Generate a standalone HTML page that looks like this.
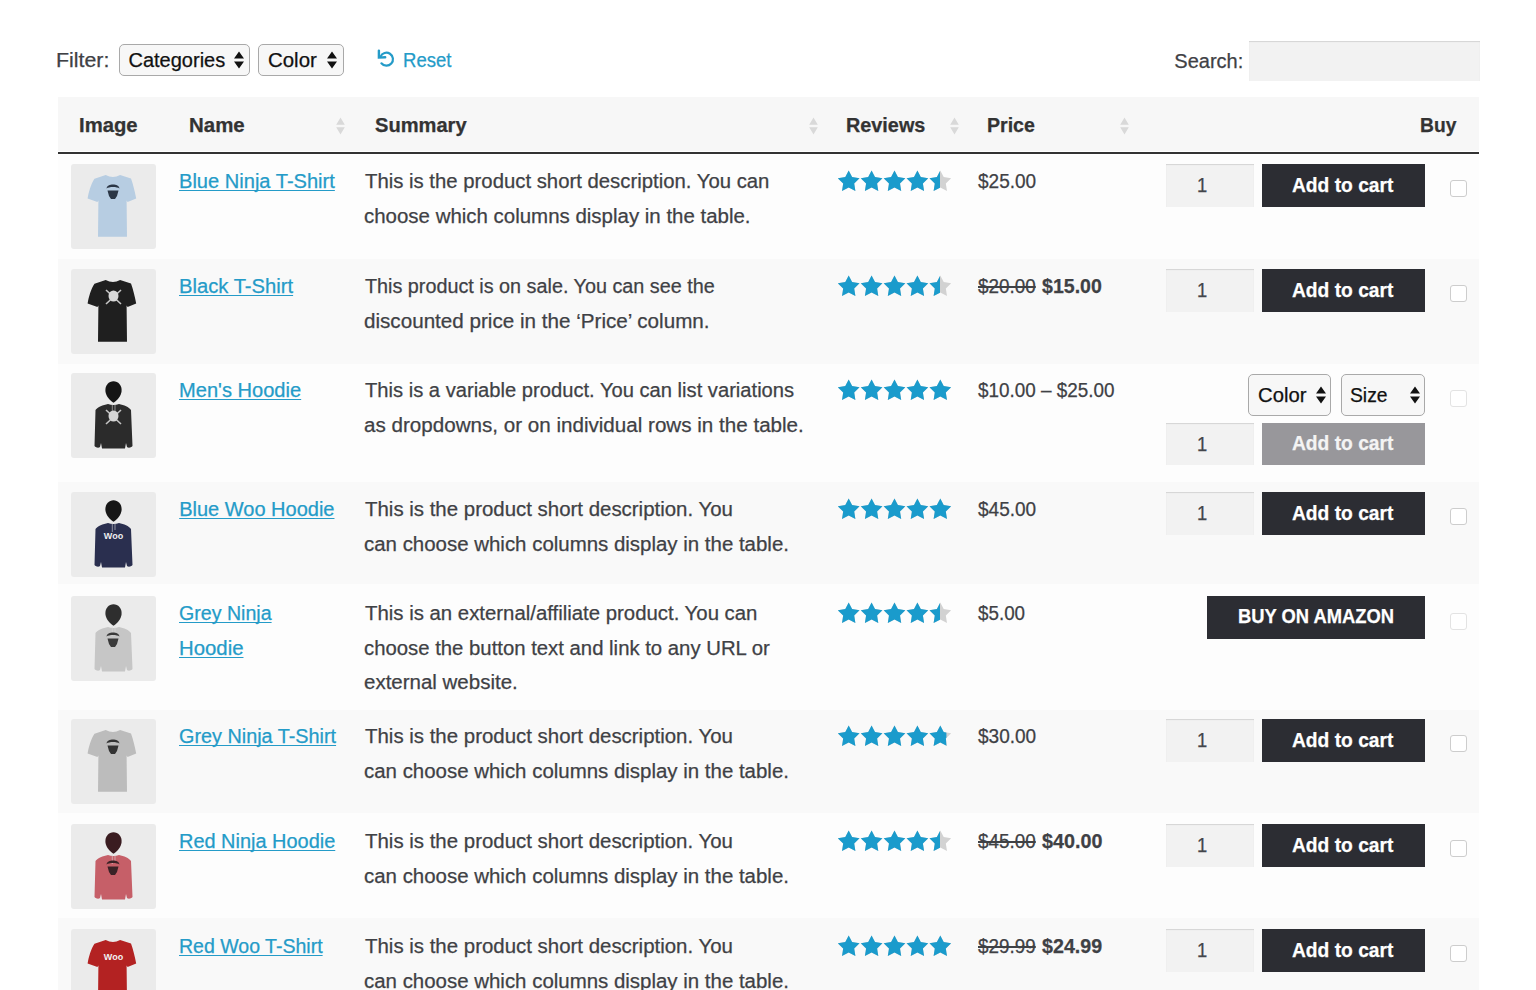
<!DOCTYPE html>
<html><head><meta charset="utf-8"><title>Product Table</title>
<style>
html,body{margin:0;padding:0;background:#fff;}
body{width:1536px;height:990px;overflow:hidden;position:relative;font-family:"Liberation Sans",sans-serif;}
.t{position:absolute;white-space:nowrap;-webkit-text-stroke:0.25px currentColor;}
.r{position:absolute;}
</style></head><body>
<div class="t" style="left:56.43px;top:50.07px;font-size:20px;line-height:20px;font-weight:400;color:#3f4145;transform:scaleX(1.0677);transform-origin:0 0;">Filter:</div>
<div class="r" style="left:118.5px;top:43.5px;width:131px;height:32.5px;border:1px solid #a9a9a9;border-radius:5px;background:#f7f7f7;box-sizing:border-box;"></div>
<div class="t" style="left:128.5px;top:50.32px;font-size:20px;line-height:20px;font-weight:400;color:#111;">Categories</div>
<svg class="r" style="left:233px;top:50.75px" width="12" height="18" viewBox="0 0 12 18"><path d="M6 0.5 L11 7.5 L1 7.5 Z M1 10.5 L11 10.5 L6 17.5 Z" fill="#111"/></svg>
<div class="r" style="left:257.5px;top:43.5px;width:86px;height:32.5px;border:1px solid #a9a9a9;border-radius:5px;background:#f7f7f7;box-sizing:border-box;"></div>
<div class="t" style="left:267.98px;top:50.32px;font-size:20px;line-height:20px;font-weight:400;color:#111;transform:scaleX(1.0213);transform-origin:0 0;">Color</div>
<svg class="r" style="left:326px;top:50.75px" width="12" height="18" viewBox="0 0 12 18"><path d="M6 0.5 L11 7.5 L1 7.5 Z M1 10.5 L11 10.5 L6 17.5 Z" fill="#111"/></svg>
<svg class="r" style="left:370px;top:44px" width="40" height="30" viewBox="0 0 40 30"><path d="M10.5 12.6 A6.5 6.5 0 1 1 11.4 19.3" fill="none" stroke="#249bc8" stroke-width="2.2" stroke-linecap="round"/><path d="M8.9 6.6 L8.9 13.6 L15.2 13.3" fill="none" stroke="#249bc8" stroke-width="2.4" stroke-linecap="round" stroke-linejoin="miter"/></svg>
<div class="t" style="left:402.57px;top:50.07px;font-size:20px;line-height:20px;font-weight:400;color:#249bc8;transform:scaleX(0.9269);transform-origin:0 0;">Reset</div>
<div class="t" style="left:1174.3px;top:51.37px;font-size:20px;line-height:20px;font-weight:400;color:#3f4145;">Search:</div>
<div class="r" style="left:1248.6px;top:40.5px;width:231px;height:40.5px;background:#f2f2f2;box-shadow:inset 0 1px 1px rgba(0,0,0,.125);"></div>
<div class="r" style="left:57.7px;top:96.7px;width:1421.5px;height:54.5px;background:#f7f7f7;"></div>
<div class="r" style="left:57.7px;top:152px;width:1421.5px;height:2.2px;background:#333;"></div>
<div class="t" style="left:79.19px;top:115.07px;font-size:20px;line-height:20px;font-weight:700;color:#333333;transform:scaleX(1.014);transform-origin:0 0;">Image</div>
<div class="t" style="left:188.98px;top:115.07px;font-size:20px;line-height:20px;font-weight:700;color:#333333;transform:scaleX(1.0226);transform-origin:0 0;">Name</div>
<div class="t" style="left:374.6px;top:115.07px;font-size:20px;line-height:20px;font-weight:700;color:#333333;transform:scaleX(1.0044);transform-origin:0 0;">Summary</div>
<div class="t" style="left:846.01px;top:115.07px;font-size:20px;line-height:20px;font-weight:700;color:#333333;transform:scaleX(0.9911);transform-origin:0 0;">Reviews</div>
<div class="t" style="left:987.02px;top:115.07px;font-size:20px;line-height:20px;font-weight:700;color:#333333;transform:scaleX(0.9792);transform-origin:0 0;">Price</div>
<div class="t" style="left:1419.74px;top:115.07px;font-size:20px;line-height:20px;font-weight:700;color:#333333;transform:scaleX(0.9622);transform-origin:0 0;">Buy</div>
<svg class="r" style="left:335.7px;top:116.5px" width="9" height="18" viewBox="0 0 9 18"><path d="M4.5 0.5 L8.8 7.8 L0.2 7.8 Z M0.2 10.2 L8.8 10.2 L4.5 17.5 Z" fill="#d9d9d9"/></svg>
<svg class="r" style="left:808.5px;top:116.5px" width="9" height="18" viewBox="0 0 9 18"><path d="M4.5 0.5 L8.8 7.8 L0.2 7.8 Z M0.2 10.2 L8.8 10.2 L4.5 17.5 Z" fill="#d9d9d9"/></svg>
<svg class="r" style="left:949.5px;top:116.5px" width="9" height="18" viewBox="0 0 9 18"><path d="M4.5 0.5 L8.8 7.8 L0.2 7.8 Z M0.2 10.2 L8.8 10.2 L4.5 17.5 Z" fill="#d9d9d9"/></svg>
<svg class="r" style="left:1119.5px;top:116.5px" width="9" height="18" viewBox="0 0 9 18"><path d="M4.5 0.5 L8.8 7.8 L0.2 7.8 Z M0.2 10.2 L8.8 10.2 L4.5 17.5 Z" fill="#d9d9d9"/></svg>
<div class="r" style="left:57.7px;top:154.5px;width:1421.5px;height:104.25px;background:#fdfdfd;"></div>
<div class="r" style="left:57.7px;top:258.75px;width:1421.5px;height:105.25px;background:#f9f9f9;"></div>
<div class="r" style="left:57.7px;top:364px;width:1421.5px;height:117.5px;background:#fdfdfd;"></div>
<div class="r" style="left:57.7px;top:481.5px;width:1421.5px;height:102.0px;background:#f9f9f9;"></div>
<div class="r" style="left:57.7px;top:583.5px;width:1421.5px;height:126.0px;background:#fdfdfd;"></div>
<div class="r" style="left:57.7px;top:709.5px;width:1421.5px;height:103.0px;background:#f9f9f9;"></div>
<div class="r" style="left:57.7px;top:812.5px;width:1421.5px;height:105.0px;background:#fdfdfd;"></div>
<div class="r" style="left:57.7px;top:917.5px;width:1421.5px;height:106.5px;background:#f9f9f9;"></div>
<svg class="r" style="left:70.5px;top:164px" width="85" height="85" viewBox="0 0 85 85"><rect width="85" height="85" rx="3" fill="#ebebeb"/><path d="M34.7,11 Q42,14.8 49.1,11 L60,14.5 C62,20 64,28 65.2,34.5 L56.6,38 L55.6,36.5 L56,72.8 L27,72.8 L27.4,36.5 L26.4,38 L16.6,34.5 C17.8,28 20,20 23.5,14.8 Z" fill="#b7cde2"/><path d="M35.5,24.5 C36,19 48,19 48.5,24.5 C46,22.5 38,22.5 35.5,24.5 Z M36.5,26.5 L47.5,26.5 L46,32 L44,35 L40,35 L38,32 Z" fill="#2b3645"/></svg>
<div class="t" style="left:179.2px;top:171.07px;font-size:20px;line-height:20px;font-weight:400;color:#249bc8;transform:scaleX(1.0038);transform-origin:0 0;text-decoration:underline;text-decoration-thickness:1.2px;text-underline-offset:1.8px;text-decoration-skip-ink:none;">Blue Ninja T-Shirt</div>
<div class="t" style="left:364.8px;top:171.07px;font-size:20px;line-height:20px;font-weight:400;color:#3f4145;transform:scaleX(1.0161);transform-origin:0 0;">This is the product short description. You can</div>
<div class="t" style="left:363.78px;top:205.77px;font-size:20px;line-height:20px;font-weight:400;color:#3f4145;transform:scaleX(1.0226);transform-origin:0 0;">choose which columns display in the table.</div>
<svg class="r" style="left:837.5px;top:170.3px" width="116" height="23" viewBox="0 0 116 23"><defs><clipPath id="c170"><rect x="0" y="0" width="102.1" height="23"/></clipPath></defs><g fill="#d2d2d2"><polygon transform="translate(0.00,0)" points="10.70,0.40 14.11,7.11 21.54,8.28 16.22,13.59 17.40,21.02 10.70,17.60 4.00,21.02 5.18,13.59 -0.14,8.28 7.29,7.11"/><polygon transform="translate(22.90,0)" points="10.70,0.40 14.11,7.11 21.54,8.28 16.22,13.59 17.40,21.02 10.70,17.60 4.00,21.02 5.18,13.59 -0.14,8.28 7.29,7.11"/><polygon transform="translate(45.80,0)" points="10.70,0.40 14.11,7.11 21.54,8.28 16.22,13.59 17.40,21.02 10.70,17.60 4.00,21.02 5.18,13.59 -0.14,8.28 7.29,7.11"/><polygon transform="translate(68.70,0)" points="10.70,0.40 14.11,7.11 21.54,8.28 16.22,13.59 17.40,21.02 10.70,17.60 4.00,21.02 5.18,13.59 -0.14,8.28 7.29,7.11"/><polygon transform="translate(91.60,0)" points="10.70,0.40 14.11,7.11 21.54,8.28 16.22,13.59 17.40,21.02 10.70,17.60 4.00,21.02 5.18,13.59 -0.14,8.28 7.29,7.11"/></g><g fill="#1a9bcc" clip-path="url(#c170)"><polygon transform="translate(0.00,0)" points="10.70,0.40 14.11,7.11 21.54,8.28 16.22,13.59 17.40,21.02 10.70,17.60 4.00,21.02 5.18,13.59 -0.14,8.28 7.29,7.11"/><polygon transform="translate(22.90,0)" points="10.70,0.40 14.11,7.11 21.54,8.28 16.22,13.59 17.40,21.02 10.70,17.60 4.00,21.02 5.18,13.59 -0.14,8.28 7.29,7.11"/><polygon transform="translate(45.80,0)" points="10.70,0.40 14.11,7.11 21.54,8.28 16.22,13.59 17.40,21.02 10.70,17.60 4.00,21.02 5.18,13.59 -0.14,8.28 7.29,7.11"/><polygon transform="translate(68.70,0)" points="10.70,0.40 14.11,7.11 21.54,8.28 16.22,13.59 17.40,21.02 10.70,17.60 4.00,21.02 5.18,13.59 -0.14,8.28 7.29,7.11"/><polygon transform="translate(91.60,0)" points="10.70,0.40 14.11,7.11 21.54,8.28 16.22,13.59 17.40,21.02 10.70,17.60 4.00,21.02 5.18,13.59 -0.14,8.28 7.29,7.11"/></g></svg>
<div class="t" style="left:978.0px;top:171.07px;font-size:20px;line-height:20px;font-weight:400;color:#3f4145;transform:scaleX(0.9508);transform-origin:0 0;">$25.00</div>
<div class="r" style="left:1166.4px;top:164px;width:87.5px;height:42.5px;background:#f2f2f2;box-shadow:inset 0 1px 1px rgba(0,0,0,.125);"></div>
<div class="t" style="left:1196.88px;top:175.07px;font-size:20px;line-height:20px;font-weight:400;color:#43454b;transform:scaleX(0.92);transform-origin:0 0;">1</div>
<div class="r" style="left:1261.6px;top:164px;width:163.6px;height:43px;background:#2c2d33;"></div>
<div class="t" style="left:1292.2px;top:175.27px;font-size:20px;line-height:20px;font-weight:700;color:#fff;transform:scaleX(0.9604);transform-origin:0 0;">Add to cart</div>
<div class="r" style="left:1449.7px;top:180.3px;width:17px;height:17px;border:1px solid #cdcdcd;border-radius:3px;background:#fff;box-sizing:border-box;"></div>
<svg class="r" style="left:70.5px;top:269px" width="85" height="85" viewBox="0 0 85 85"><rect width="85" height="85" rx="3" fill="#ebebeb"/><path d="M34.7,11 Q42,14.8 49.1,11 L60,14.5 C62,20 64,28 65.2,34.5 L56.6,38 L55.6,36.5 L56,72.8 L27,72.8 L27.4,36.5 L26.4,38 L16.6,34.5 C17.8,28 20,20 23.5,14.8 Z" fill="#1f1f1f"/><g stroke="#d9d9d9" stroke-width="1.6" opacity="0.9"><path d="M35,21 L50,35 M50,21 L35,35"/></g><ellipse cx="42.5" cy="27" rx="5" ry="5.5" fill="#d9d9d9"/></svg>
<div class="t" style="left:179.2px;top:276.07px;font-size:20px;line-height:20px;font-weight:400;color:#249bc8;transform:scaleX(1.0097);transform-origin:0 0;text-decoration:underline;text-decoration-thickness:1.2px;text-underline-offset:1.8px;text-decoration-skip-ink:none;">Black T-Shirt</div>
<div class="t" style="left:364.8px;top:276.07px;font-size:20px;line-height:20px;font-weight:400;color:#3f4145;transform:scaleX(0.989);transform-origin:0 0;">This product is on sale. You can see the</div>
<div class="t" style="left:363.77px;top:310.77px;font-size:20px;line-height:20px;font-weight:400;color:#3f4145;transform:scaleX(1.0315);transform-origin:0 0;">discounted price in the ‘Price’ column.</div>
<svg class="r" style="left:837.5px;top:275.3px" width="116" height="23" viewBox="0 0 116 23"><defs><clipPath id="c275"><rect x="0" y="0" width="102.1" height="23"/></clipPath></defs><g fill="#d2d2d2"><polygon transform="translate(0.00,0)" points="10.70,0.40 14.11,7.11 21.54,8.28 16.22,13.59 17.40,21.02 10.70,17.60 4.00,21.02 5.18,13.59 -0.14,8.28 7.29,7.11"/><polygon transform="translate(22.90,0)" points="10.70,0.40 14.11,7.11 21.54,8.28 16.22,13.59 17.40,21.02 10.70,17.60 4.00,21.02 5.18,13.59 -0.14,8.28 7.29,7.11"/><polygon transform="translate(45.80,0)" points="10.70,0.40 14.11,7.11 21.54,8.28 16.22,13.59 17.40,21.02 10.70,17.60 4.00,21.02 5.18,13.59 -0.14,8.28 7.29,7.11"/><polygon transform="translate(68.70,0)" points="10.70,0.40 14.11,7.11 21.54,8.28 16.22,13.59 17.40,21.02 10.70,17.60 4.00,21.02 5.18,13.59 -0.14,8.28 7.29,7.11"/><polygon transform="translate(91.60,0)" points="10.70,0.40 14.11,7.11 21.54,8.28 16.22,13.59 17.40,21.02 10.70,17.60 4.00,21.02 5.18,13.59 -0.14,8.28 7.29,7.11"/></g><g fill="#1a9bcc" clip-path="url(#c275)"><polygon transform="translate(0.00,0)" points="10.70,0.40 14.11,7.11 21.54,8.28 16.22,13.59 17.40,21.02 10.70,17.60 4.00,21.02 5.18,13.59 -0.14,8.28 7.29,7.11"/><polygon transform="translate(22.90,0)" points="10.70,0.40 14.11,7.11 21.54,8.28 16.22,13.59 17.40,21.02 10.70,17.60 4.00,21.02 5.18,13.59 -0.14,8.28 7.29,7.11"/><polygon transform="translate(45.80,0)" points="10.70,0.40 14.11,7.11 21.54,8.28 16.22,13.59 17.40,21.02 10.70,17.60 4.00,21.02 5.18,13.59 -0.14,8.28 7.29,7.11"/><polygon transform="translate(68.70,0)" points="10.70,0.40 14.11,7.11 21.54,8.28 16.22,13.59 17.40,21.02 10.70,17.60 4.00,21.02 5.18,13.59 -0.14,8.28 7.29,7.11"/><polygon transform="translate(91.60,0)" points="10.70,0.40 14.11,7.11 21.54,8.28 16.22,13.59 17.40,21.02 10.70,17.60 4.00,21.02 5.18,13.59 -0.14,8.28 7.29,7.11"/></g></svg>
<div class="t" style="left:978.0px;top:276.07px;font-size:20px;line-height:20px;font-weight:400;color:#3f4145;transform:scaleX(0.9443);transform-origin:0 0;text-decoration:line-through;text-decoration-thickness:1.5px;">$20.00</div>
<div class="t" style="left:1042.0px;top:276.07px;font-size:20px;line-height:20px;font-weight:700;color:#3f4145;transform:scaleX(0.9787);transform-origin:0 0;">$15.00</div>
<div class="r" style="left:1166.4px;top:269px;width:87.5px;height:42.5px;background:#f2f2f2;box-shadow:inset 0 1px 1px rgba(0,0,0,.125);"></div>
<div class="t" style="left:1196.88px;top:280.07px;font-size:20px;line-height:20px;font-weight:400;color:#43454b;transform:scaleX(0.92);transform-origin:0 0;">1</div>
<div class="r" style="left:1261.6px;top:269px;width:163.6px;height:43px;background:#2c2d33;"></div>
<div class="t" style="left:1292.2px;top:280.27px;font-size:20px;line-height:20px;font-weight:700;color:#fff;transform:scaleX(0.9604);transform-origin:0 0;">Add to cart</div>
<div class="r" style="left:1449.7px;top:285.3px;width:17px;height:17px;border:1px solid #cdcdcd;border-radius:3px;background:#fff;box-sizing:border-box;"></div>
<svg class="r" style="left:70.5px;top:373px" width="85" height="85" viewBox="0 0 85 85"><rect width="85" height="85" rx="3" fill="#ebebeb"/><path d="M37,31 Q42.5,33 48,31 C53,32 58,34 60,37 L61.5,73 C60,75 57,75 56,74 L55,70 L54,75.5 L31,75.5 L30,70 L29,74 C28,75 25,75 23.5,73 L24.5,37 C26.5,34 32,32 37,31 Z" fill="#2b2b2b"/><path d="M42.5,8.3 C47.2,8.3 51,12.5 50.6,18 C50.2,23 46.5,27 42.5,29.8 C38.5,27 34.8,23 34.4,18 C34,12.5 37.8,8.3 42.5,8.3 Z" fill="#151515"/><path d="M41.3,30 L41.3,40 M44,30 L44,38" stroke="#ddd" stroke-width="0.8" opacity="0.7"/><g stroke="#d5d5d5" stroke-width="1.6" opacity="0.9"><path d="M35,37 L50,51 M50,37 L35,51"/></g><ellipse cx="42.5" cy="43" rx="5" ry="5.5" fill="#d5d5d5"/></svg>
<div class="t" style="left:179.2px;top:380.07px;font-size:20px;line-height:20px;font-weight:400;color:#249bc8;transform:scaleX(1.0041);transform-origin:0 0;text-decoration:underline;text-decoration-thickness:1.2px;text-underline-offset:1.8px;text-decoration-skip-ink:none;">Men's Hoodie</div>
<div class="t" style="left:364.8px;top:380.07px;font-size:20px;line-height:20px;font-weight:400;color:#3f4145;transform:scaleX(1.0078);transform-origin:0 0;">This is a variable product. You can list variations</div>
<div class="t" style="left:363.77px;top:414.77px;font-size:20px;line-height:20px;font-weight:400;color:#3f4145;transform:scaleX(1.0302);transform-origin:0 0;">as dropdowns, or on individual rows in the table.</div>
<svg class="r" style="left:837.5px;top:379.3px" width="116" height="23" viewBox="0 0 116 23"><defs><clipPath id="c379"><rect x="0" y="0" width="116.0" height="23"/></clipPath></defs><g fill="#d2d2d2"><polygon transform="translate(0.00,0)" points="10.70,0.40 14.11,7.11 21.54,8.28 16.22,13.59 17.40,21.02 10.70,17.60 4.00,21.02 5.18,13.59 -0.14,8.28 7.29,7.11"/><polygon transform="translate(22.90,0)" points="10.70,0.40 14.11,7.11 21.54,8.28 16.22,13.59 17.40,21.02 10.70,17.60 4.00,21.02 5.18,13.59 -0.14,8.28 7.29,7.11"/><polygon transform="translate(45.80,0)" points="10.70,0.40 14.11,7.11 21.54,8.28 16.22,13.59 17.40,21.02 10.70,17.60 4.00,21.02 5.18,13.59 -0.14,8.28 7.29,7.11"/><polygon transform="translate(68.70,0)" points="10.70,0.40 14.11,7.11 21.54,8.28 16.22,13.59 17.40,21.02 10.70,17.60 4.00,21.02 5.18,13.59 -0.14,8.28 7.29,7.11"/><polygon transform="translate(91.60,0)" points="10.70,0.40 14.11,7.11 21.54,8.28 16.22,13.59 17.40,21.02 10.70,17.60 4.00,21.02 5.18,13.59 -0.14,8.28 7.29,7.11"/></g><g fill="#1a9bcc" clip-path="url(#c379)"><polygon transform="translate(0.00,0)" points="10.70,0.40 14.11,7.11 21.54,8.28 16.22,13.59 17.40,21.02 10.70,17.60 4.00,21.02 5.18,13.59 -0.14,8.28 7.29,7.11"/><polygon transform="translate(22.90,0)" points="10.70,0.40 14.11,7.11 21.54,8.28 16.22,13.59 17.40,21.02 10.70,17.60 4.00,21.02 5.18,13.59 -0.14,8.28 7.29,7.11"/><polygon transform="translate(45.80,0)" points="10.70,0.40 14.11,7.11 21.54,8.28 16.22,13.59 17.40,21.02 10.70,17.60 4.00,21.02 5.18,13.59 -0.14,8.28 7.29,7.11"/><polygon transform="translate(68.70,0)" points="10.70,0.40 14.11,7.11 21.54,8.28 16.22,13.59 17.40,21.02 10.70,17.60 4.00,21.02 5.18,13.59 -0.14,8.28 7.29,7.11"/><polygon transform="translate(91.60,0)" points="10.70,0.40 14.11,7.11 21.54,8.28 16.22,13.59 17.40,21.02 10.70,17.60 4.00,21.02 5.18,13.59 -0.14,8.28 7.29,7.11"/></g></svg>
<div class="t" style="left:978.0px;top:380.07px;font-size:20px;line-height:20px;font-weight:400;color:#3f4145;transform:scaleX(0.9444);transform-origin:0 0;">$10.00 – $25.00</div>
<div class="r" style="left:1248px;top:373.6px;width:83px;height:42.2px;border:1px solid #a9a9a9;border-radius:5px;background:#f7f7f7;box-sizing:border-box;"></div>
<div class="t" style="left:1258.39px;top:385.27px;font-size:20px;line-height:20px;font-weight:400;color:#111;transform:scaleX(1.0128);transform-origin:0 0;">Color</div>
<svg class="r" style="left:1314.5px;top:385.70000000000005px" width="12" height="18" viewBox="0 0 12 18"><path d="M6 0.5 L11 7.5 L1 7.5 Z M1 10.5 L11 10.5 L6 17.5 Z" fill="#111"/></svg>
<div class="r" style="left:1340.8px;top:373.6px;width:84px;height:42.2px;border:1px solid #a9a9a9;border-radius:5px;background:#f7f7f7;box-sizing:border-box;"></div>
<div class="t" style="left:1350.04px;top:385.27px;font-size:20px;line-height:20px;font-weight:400;color:#111;transform:scaleX(0.9649);transform-origin:0 0;">Size</div>
<svg class="r" style="left:1408.5px;top:385.70000000000005px" width="12" height="18" viewBox="0 0 12 18"><path d="M6 0.5 L11 7.5 L1 7.5 Z M1 10.5 L11 10.5 L6 17.5 Z" fill="#111"/></svg>
<div class="r" style="left:1449.7px;top:389.5px;width:17px;height:17px;border:1px solid #e3e3e3;border-radius:3px;background:#fff;box-sizing:border-box;"></div>
<div class="r" style="left:1166.4px;top:422.8px;width:87.5px;height:42.6px;background:#f2f2f2;box-shadow:inset 0 1px 1px rgba(0,0,0,.125);"></div>
<div class="t" style="left:1196.88px;top:433.87px;font-size:20px;line-height:20px;font-weight:400;color:#43454b;transform:scaleX(0.92);transform-origin:0 0;">1</div>
<div class="r" style="left:1261.6px;top:423px;width:163.6px;height:42.4px;background:#98979b;"></div>
<div class="t" style="left:1292.2px;top:433.07px;font-size:20px;line-height:20px;font-weight:700;color:#f4f4f4;transform:scaleX(0.9604);transform-origin:0 0;">Add to cart</div>
<svg class="r" style="left:70.5px;top:492px" width="85" height="85" viewBox="0 0 85 85"><rect width="85" height="85" rx="3" fill="#ebebeb"/><path d="M37,31 Q42.5,33 48,31 C53,32 58,34 60,37 L61.5,73 C60,75 57,75 56,74 L55,70 L54,75.5 L31,75.5 L30,70 L29,74 C28,75 25,75 23.5,73 L24.5,37 C26.5,34 32,32 37,31 Z" fill="#2a2f4f"/><path d="M42.5,8.3 C47.2,8.3 51,12.5 50.6,18 C50.2,23 46.5,27 42.5,29.8 C38.5,27 34.8,23 34.4,18 C34,12.5 37.8,8.3 42.5,8.3 Z" fill="#161616"/><path d="M41.3,30 L41.3,40 M44,30 L44,38" stroke="#ddd" stroke-width="0.8" opacity="0.7"/><text x="42.5" y="47" text-anchor="middle" font-family="Liberation Sans" font-weight="700" font-size="9" fill="#eeeeee">Woo</text></svg>
<div class="t" style="left:179.2px;top:499.07px;font-size:20px;line-height:20px;font-weight:400;color:#249bc8;text-decoration:underline;text-decoration-thickness:1.2px;text-underline-offset:1.8px;text-decoration-skip-ink:none;">Blue Woo Hoodie</div>
<div class="t" style="left:364.8px;top:499.07px;font-size:20px;line-height:20px;font-weight:400;color:#3f4145;transform:scaleX(1.0214);transform-origin:0 0;">This is the product short description. You</div>
<div class="t" style="left:363.78px;top:533.77px;font-size:20px;line-height:20px;font-weight:400;color:#3f4145;transform:scaleX(1.022);transform-origin:0 0;">can choose which columns display in the table.</div>
<svg class="r" style="left:837.5px;top:498.3px" width="116" height="23" viewBox="0 0 116 23"><defs><clipPath id="c498"><rect x="0" y="0" width="116.0" height="23"/></clipPath></defs><g fill="#d2d2d2"><polygon transform="translate(0.00,0)" points="10.70,0.40 14.11,7.11 21.54,8.28 16.22,13.59 17.40,21.02 10.70,17.60 4.00,21.02 5.18,13.59 -0.14,8.28 7.29,7.11"/><polygon transform="translate(22.90,0)" points="10.70,0.40 14.11,7.11 21.54,8.28 16.22,13.59 17.40,21.02 10.70,17.60 4.00,21.02 5.18,13.59 -0.14,8.28 7.29,7.11"/><polygon transform="translate(45.80,0)" points="10.70,0.40 14.11,7.11 21.54,8.28 16.22,13.59 17.40,21.02 10.70,17.60 4.00,21.02 5.18,13.59 -0.14,8.28 7.29,7.11"/><polygon transform="translate(68.70,0)" points="10.70,0.40 14.11,7.11 21.54,8.28 16.22,13.59 17.40,21.02 10.70,17.60 4.00,21.02 5.18,13.59 -0.14,8.28 7.29,7.11"/><polygon transform="translate(91.60,0)" points="10.70,0.40 14.11,7.11 21.54,8.28 16.22,13.59 17.40,21.02 10.70,17.60 4.00,21.02 5.18,13.59 -0.14,8.28 7.29,7.11"/></g><g fill="#1a9bcc" clip-path="url(#c498)"><polygon transform="translate(0.00,0)" points="10.70,0.40 14.11,7.11 21.54,8.28 16.22,13.59 17.40,21.02 10.70,17.60 4.00,21.02 5.18,13.59 -0.14,8.28 7.29,7.11"/><polygon transform="translate(22.90,0)" points="10.70,0.40 14.11,7.11 21.54,8.28 16.22,13.59 17.40,21.02 10.70,17.60 4.00,21.02 5.18,13.59 -0.14,8.28 7.29,7.11"/><polygon transform="translate(45.80,0)" points="10.70,0.40 14.11,7.11 21.54,8.28 16.22,13.59 17.40,21.02 10.70,17.60 4.00,21.02 5.18,13.59 -0.14,8.28 7.29,7.11"/><polygon transform="translate(68.70,0)" points="10.70,0.40 14.11,7.11 21.54,8.28 16.22,13.59 17.40,21.02 10.70,17.60 4.00,21.02 5.18,13.59 -0.14,8.28 7.29,7.11"/><polygon transform="translate(91.60,0)" points="10.70,0.40 14.11,7.11 21.54,8.28 16.22,13.59 17.40,21.02 10.70,17.60 4.00,21.02 5.18,13.59 -0.14,8.28 7.29,7.11"/></g></svg>
<div class="t" style="left:978.0px;top:499.07px;font-size:20px;line-height:20px;font-weight:400;color:#3f4145;transform:scaleX(0.9508);transform-origin:0 0;">$45.00</div>
<div class="r" style="left:1166.4px;top:492px;width:87.5px;height:42.5px;background:#f2f2f2;box-shadow:inset 0 1px 1px rgba(0,0,0,.125);"></div>
<div class="t" style="left:1196.88px;top:503.07px;font-size:20px;line-height:20px;font-weight:400;color:#43454b;transform:scaleX(0.92);transform-origin:0 0;">1</div>
<div class="r" style="left:1261.6px;top:492px;width:163.6px;height:43px;background:#2c2d33;"></div>
<div class="t" style="left:1292.2px;top:503.27px;font-size:20px;line-height:20px;font-weight:700;color:#fff;transform:scaleX(0.9604);transform-origin:0 0;">Add to cart</div>
<div class="r" style="left:1449.7px;top:508.3px;width:17px;height:17px;border:1px solid #cdcdcd;border-radius:3px;background:#fff;box-sizing:border-box;"></div>
<svg class="r" style="left:70.5px;top:596px" width="85" height="85" viewBox="0 0 85 85"><rect width="85" height="85" rx="3" fill="#ebebeb"/><path d="M37,31 Q42.5,33 48,31 C53,32 58,34 60,37 L61.5,73 C60,75 57,75 56,74 L55,70 L54,75.5 L31,75.5 L30,70 L29,74 C28,75 25,75 23.5,73 L24.5,37 C26.5,34 32,32 37,31 Z" fill="#c6c6c6"/><path d="M42.5,8.3 C47.2,8.3 51,12.5 50.6,18 C50.2,23 46.5,27 42.5,29.8 C38.5,27 34.8,23 34.4,18 C34,12.5 37.8,8.3 42.5,8.3 Z" fill="#2e2e2e"/><path d="M41.3,30 L41.3,40 M44,30 L44,38" stroke="#ddd" stroke-width="0.8" opacity="0.7"/><path d="M35.5,40.5 C36,35 48,35 48.5,40.5 C46,38.5 38,38.5 35.5,40.5 Z M36.5,42.5 L47.5,42.5 L46,48 L44,51 L40,51 L38,48 Z" fill="#3a3a3a"/></svg>
<div class="t" style="left:179.2px;top:603.07px;font-size:20px;line-height:20px;font-weight:400;color:#249bc8;transform:scaleX(0.98);transform-origin:0 0;text-decoration:underline;text-decoration-thickness:1.2px;text-underline-offset:1.8px;text-decoration-skip-ink:none;">Grey Ninja</div>
<div class="t" style="left:179.2px;top:637.77px;font-size:20px;line-height:20px;font-weight:400;color:#249bc8;transform:scaleX(1.0172);transform-origin:0 0;text-decoration:underline;text-decoration-thickness:1.2px;text-underline-offset:1.8px;text-decoration-skip-ink:none;">Hoodie</div>
<div class="t" style="left:364.8px;top:603.07px;font-size:20px;line-height:20px;font-weight:400;color:#3f4145;transform:scaleX(1.0182);transform-origin:0 0;">This is an external/affiliate product. You can</div>
<div class="t" style="left:363.78px;top:637.77px;font-size:20px;line-height:20px;font-weight:400;color:#3f4145;transform:scaleX(1.0158);transform-origin:0 0;">choose the button text and link to any URL or</div>
<div class="t" style="left:363.78px;top:672.47px;font-size:20px;line-height:20px;font-weight:400;color:#3f4145;transform:scaleX(1.0243);transform-origin:0 0;">external website.</div>
<svg class="r" style="left:837.5px;top:602.3px" width="116" height="23" viewBox="0 0 116 23"><defs><clipPath id="c602"><rect x="0" y="0" width="102.1" height="23"/></clipPath></defs><g fill="#d2d2d2"><polygon transform="translate(0.00,0)" points="10.70,0.40 14.11,7.11 21.54,8.28 16.22,13.59 17.40,21.02 10.70,17.60 4.00,21.02 5.18,13.59 -0.14,8.28 7.29,7.11"/><polygon transform="translate(22.90,0)" points="10.70,0.40 14.11,7.11 21.54,8.28 16.22,13.59 17.40,21.02 10.70,17.60 4.00,21.02 5.18,13.59 -0.14,8.28 7.29,7.11"/><polygon transform="translate(45.80,0)" points="10.70,0.40 14.11,7.11 21.54,8.28 16.22,13.59 17.40,21.02 10.70,17.60 4.00,21.02 5.18,13.59 -0.14,8.28 7.29,7.11"/><polygon transform="translate(68.70,0)" points="10.70,0.40 14.11,7.11 21.54,8.28 16.22,13.59 17.40,21.02 10.70,17.60 4.00,21.02 5.18,13.59 -0.14,8.28 7.29,7.11"/><polygon transform="translate(91.60,0)" points="10.70,0.40 14.11,7.11 21.54,8.28 16.22,13.59 17.40,21.02 10.70,17.60 4.00,21.02 5.18,13.59 -0.14,8.28 7.29,7.11"/></g><g fill="#1a9bcc" clip-path="url(#c602)"><polygon transform="translate(0.00,0)" points="10.70,0.40 14.11,7.11 21.54,8.28 16.22,13.59 17.40,21.02 10.70,17.60 4.00,21.02 5.18,13.59 -0.14,8.28 7.29,7.11"/><polygon transform="translate(22.90,0)" points="10.70,0.40 14.11,7.11 21.54,8.28 16.22,13.59 17.40,21.02 10.70,17.60 4.00,21.02 5.18,13.59 -0.14,8.28 7.29,7.11"/><polygon transform="translate(45.80,0)" points="10.70,0.40 14.11,7.11 21.54,8.28 16.22,13.59 17.40,21.02 10.70,17.60 4.00,21.02 5.18,13.59 -0.14,8.28 7.29,7.11"/><polygon transform="translate(68.70,0)" points="10.70,0.40 14.11,7.11 21.54,8.28 16.22,13.59 17.40,21.02 10.70,17.60 4.00,21.02 5.18,13.59 -0.14,8.28 7.29,7.11"/><polygon transform="translate(91.60,0)" points="10.70,0.40 14.11,7.11 21.54,8.28 16.22,13.59 17.40,21.02 10.70,17.60 4.00,21.02 5.18,13.59 -0.14,8.28 7.29,7.11"/></g></svg>
<div class="t" style="left:978.0px;top:603.07px;font-size:20px;line-height:20px;font-weight:400;color:#3f4145;transform:scaleX(0.94);transform-origin:0 0;">$5.00</div>
<div class="r" style="left:1207.3px;top:596.4px;width:217.7px;height:42.6px;background:#2c2d33;"></div>
<div class="t" style="left:1237.68px;top:606.37px;font-size:20px;line-height:20px;font-weight:700;color:#fff;transform:scaleX(0.9179);transform-origin:0 0;">BUY ON AMAZON</div>
<div class="r" style="left:1449.7px;top:612.8px;width:17px;height:17px;border:1px solid #e3e3e3;border-radius:3px;background:#fff;box-sizing:border-box;"></div>
<svg class="r" style="left:70.5px;top:719px" width="85" height="85" viewBox="0 0 85 85"><rect width="85" height="85" rx="3" fill="#ebebeb"/><path d="M34.7,11 Q42,14.8 49.1,11 L60,14.5 C62,20 64,28 65.2,34.5 L56.6,38 L55.6,36.5 L56,72.8 L27,72.8 L27.4,36.5 L26.4,38 L16.6,34.5 C17.8,28 20,20 23.5,14.8 Z" fill="#bcbcbc"/><path d="M35.5,24.5 C36,19 48,19 48.5,24.5 C46,22.5 38,22.5 35.5,24.5 Z M36.5,26.5 L47.5,26.5 L46,32 L44,35 L40,35 L38,32 Z" fill="#333333"/></svg>
<div class="t" style="left:179.2px;top:726.07px;font-size:20px;line-height:20px;font-weight:400;color:#249bc8;transform:scaleX(0.9906);transform-origin:0 0;text-decoration:underline;text-decoration-thickness:1.2px;text-underline-offset:1.8px;text-decoration-skip-ink:none;">Grey Ninja T-Shirt</div>
<div class="t" style="left:364.8px;top:726.07px;font-size:20px;line-height:20px;font-weight:400;color:#3f4145;transform:scaleX(1.0214);transform-origin:0 0;">This is the product short description. You</div>
<div class="t" style="left:363.78px;top:760.77px;font-size:20px;line-height:20px;font-weight:400;color:#3f4145;transform:scaleX(1.022);transform-origin:0 0;">can choose which columns display in the table.</div>
<svg class="r" style="left:837.5px;top:725.3px" width="116" height="23" viewBox="0 0 116 23"><defs><clipPath id="c725"><rect x="0" y="0" width="108.4" height="23"/></clipPath></defs><g fill="#d2d2d2"><polygon transform="translate(0.00,0)" points="10.70,0.40 14.11,7.11 21.54,8.28 16.22,13.59 17.40,21.02 10.70,17.60 4.00,21.02 5.18,13.59 -0.14,8.28 7.29,7.11"/><polygon transform="translate(22.90,0)" points="10.70,0.40 14.11,7.11 21.54,8.28 16.22,13.59 17.40,21.02 10.70,17.60 4.00,21.02 5.18,13.59 -0.14,8.28 7.29,7.11"/><polygon transform="translate(45.80,0)" points="10.70,0.40 14.11,7.11 21.54,8.28 16.22,13.59 17.40,21.02 10.70,17.60 4.00,21.02 5.18,13.59 -0.14,8.28 7.29,7.11"/><polygon transform="translate(68.70,0)" points="10.70,0.40 14.11,7.11 21.54,8.28 16.22,13.59 17.40,21.02 10.70,17.60 4.00,21.02 5.18,13.59 -0.14,8.28 7.29,7.11"/><polygon transform="translate(91.60,0)" points="10.70,0.40 14.11,7.11 21.54,8.28 16.22,13.59 17.40,21.02 10.70,17.60 4.00,21.02 5.18,13.59 -0.14,8.28 7.29,7.11"/></g><g fill="#1a9bcc" clip-path="url(#c725)"><polygon transform="translate(0.00,0)" points="10.70,0.40 14.11,7.11 21.54,8.28 16.22,13.59 17.40,21.02 10.70,17.60 4.00,21.02 5.18,13.59 -0.14,8.28 7.29,7.11"/><polygon transform="translate(22.90,0)" points="10.70,0.40 14.11,7.11 21.54,8.28 16.22,13.59 17.40,21.02 10.70,17.60 4.00,21.02 5.18,13.59 -0.14,8.28 7.29,7.11"/><polygon transform="translate(45.80,0)" points="10.70,0.40 14.11,7.11 21.54,8.28 16.22,13.59 17.40,21.02 10.70,17.60 4.00,21.02 5.18,13.59 -0.14,8.28 7.29,7.11"/><polygon transform="translate(68.70,0)" points="10.70,0.40 14.11,7.11 21.54,8.28 16.22,13.59 17.40,21.02 10.70,17.60 4.00,21.02 5.18,13.59 -0.14,8.28 7.29,7.11"/><polygon transform="translate(91.60,0)" points="10.70,0.40 14.11,7.11 21.54,8.28 16.22,13.59 17.40,21.02 10.70,17.60 4.00,21.02 5.18,13.59 -0.14,8.28 7.29,7.11"/></g></svg>
<div class="t" style="left:978.0px;top:726.07px;font-size:20px;line-height:20px;font-weight:400;color:#3f4145;transform:scaleX(0.9508);transform-origin:0 0;">$30.00</div>
<div class="r" style="left:1166.4px;top:719px;width:87.5px;height:42.5px;background:#f2f2f2;box-shadow:inset 0 1px 1px rgba(0,0,0,.125);"></div>
<div class="t" style="left:1196.88px;top:730.07px;font-size:20px;line-height:20px;font-weight:400;color:#43454b;transform:scaleX(0.92);transform-origin:0 0;">1</div>
<div class="r" style="left:1261.6px;top:719px;width:163.6px;height:43px;background:#2c2d33;"></div>
<div class="t" style="left:1292.2px;top:730.27px;font-size:20px;line-height:20px;font-weight:700;color:#fff;transform:scaleX(0.9604);transform-origin:0 0;">Add to cart</div>
<div class="r" style="left:1449.7px;top:735.3px;width:17px;height:17px;border:1px solid #cdcdcd;border-radius:3px;background:#fff;box-sizing:border-box;"></div>
<svg class="r" style="left:70.5px;top:824px" width="85" height="85" viewBox="0 0 85 85"><rect width="85" height="85" rx="3" fill="#ebebeb"/><path d="M37,31 Q42.5,33 48,31 C53,32 58,34 60,37 L61.5,73 C60,75 57,75 56,74 L55,70 L54,75.5 L31,75.5 L30,70 L29,74 C28,75 25,75 23.5,73 L24.5,37 C26.5,34 32,32 37,31 Z" fill="#c65f68"/><path d="M42.5,8.3 C47.2,8.3 51,12.5 50.6,18 C50.2,23 46.5,27 42.5,29.8 C38.5,27 34.8,23 34.4,18 C34,12.5 37.8,8.3 42.5,8.3 Z" fill="#3a1c20"/><path d="M41.3,30 L41.3,40 M44,30 L44,38" stroke="#ddd" stroke-width="0.8" opacity="0.7"/><path d="M35.5,40.5 C36,35 48,35 48.5,40.5 C46,38.5 38,38.5 35.5,40.5 Z M36.5,42.5 L47.5,42.5 L46,48 L44,51 L40,51 L38,48 Z" fill="#3a2226"/></svg>
<div class="t" style="left:179.2px;top:831.07px;font-size:20px;line-height:20px;font-weight:400;color:#249bc8;transform:scaleX(0.9968);transform-origin:0 0;text-decoration:underline;text-decoration-thickness:1.2px;text-underline-offset:1.8px;text-decoration-skip-ink:none;">Red Ninja Hoodie</div>
<div class="t" style="left:364.8px;top:831.07px;font-size:20px;line-height:20px;font-weight:400;color:#3f4145;transform:scaleX(1.0214);transform-origin:0 0;">This is the product short description. You</div>
<div class="t" style="left:363.78px;top:865.77px;font-size:20px;line-height:20px;font-weight:400;color:#3f4145;transform:scaleX(1.022);transform-origin:0 0;">can choose which columns display in the table.</div>
<svg class="r" style="left:837.5px;top:830.3px" width="116" height="23" viewBox="0 0 116 23"><defs><clipPath id="c830"><rect x="0" y="0" width="102.1" height="23"/></clipPath></defs><g fill="#d2d2d2"><polygon transform="translate(0.00,0)" points="10.70,0.40 14.11,7.11 21.54,8.28 16.22,13.59 17.40,21.02 10.70,17.60 4.00,21.02 5.18,13.59 -0.14,8.28 7.29,7.11"/><polygon transform="translate(22.90,0)" points="10.70,0.40 14.11,7.11 21.54,8.28 16.22,13.59 17.40,21.02 10.70,17.60 4.00,21.02 5.18,13.59 -0.14,8.28 7.29,7.11"/><polygon transform="translate(45.80,0)" points="10.70,0.40 14.11,7.11 21.54,8.28 16.22,13.59 17.40,21.02 10.70,17.60 4.00,21.02 5.18,13.59 -0.14,8.28 7.29,7.11"/><polygon transform="translate(68.70,0)" points="10.70,0.40 14.11,7.11 21.54,8.28 16.22,13.59 17.40,21.02 10.70,17.60 4.00,21.02 5.18,13.59 -0.14,8.28 7.29,7.11"/><polygon transform="translate(91.60,0)" points="10.70,0.40 14.11,7.11 21.54,8.28 16.22,13.59 17.40,21.02 10.70,17.60 4.00,21.02 5.18,13.59 -0.14,8.28 7.29,7.11"/></g><g fill="#1a9bcc" clip-path="url(#c830)"><polygon transform="translate(0.00,0)" points="10.70,0.40 14.11,7.11 21.54,8.28 16.22,13.59 17.40,21.02 10.70,17.60 4.00,21.02 5.18,13.59 -0.14,8.28 7.29,7.11"/><polygon transform="translate(22.90,0)" points="10.70,0.40 14.11,7.11 21.54,8.28 16.22,13.59 17.40,21.02 10.70,17.60 4.00,21.02 5.18,13.59 -0.14,8.28 7.29,7.11"/><polygon transform="translate(45.80,0)" points="10.70,0.40 14.11,7.11 21.54,8.28 16.22,13.59 17.40,21.02 10.70,17.60 4.00,21.02 5.18,13.59 -0.14,8.28 7.29,7.11"/><polygon transform="translate(68.70,0)" points="10.70,0.40 14.11,7.11 21.54,8.28 16.22,13.59 17.40,21.02 10.70,17.60 4.00,21.02 5.18,13.59 -0.14,8.28 7.29,7.11"/><polygon transform="translate(91.60,0)" points="10.70,0.40 14.11,7.11 21.54,8.28 16.22,13.59 17.40,21.02 10.70,17.60 4.00,21.02 5.18,13.59 -0.14,8.28 7.29,7.11"/></g></svg>
<div class="t" style="left:978.0px;top:831.07px;font-size:20px;line-height:20px;font-weight:400;color:#3f4145;transform:scaleX(0.9443);transform-origin:0 0;text-decoration:line-through;text-decoration-thickness:1.5px;">$45.00</div>
<div class="t" style="left:1042.0px;top:831.07px;font-size:20px;line-height:20px;font-weight:700;color:#3f4145;transform:scaleX(0.9885);transform-origin:0 0;">$40.00</div>
<div class="r" style="left:1166.4px;top:824px;width:87.5px;height:42.5px;background:#f2f2f2;box-shadow:inset 0 1px 1px rgba(0,0,0,.125);"></div>
<div class="t" style="left:1196.88px;top:835.07px;font-size:20px;line-height:20px;font-weight:400;color:#43454b;transform:scaleX(0.92);transform-origin:0 0;">1</div>
<div class="r" style="left:1261.6px;top:824px;width:163.6px;height:43px;background:#2c2d33;"></div>
<div class="t" style="left:1292.2px;top:835.27px;font-size:20px;line-height:20px;font-weight:700;color:#fff;transform:scaleX(0.9604);transform-origin:0 0;">Add to cart</div>
<div class="r" style="left:1449.7px;top:840.3px;width:17px;height:17px;border:1px solid #cdcdcd;border-radius:3px;background:#fff;box-sizing:border-box;"></div>
<svg class="r" style="left:70.5px;top:929px" width="85" height="85" viewBox="0 0 85 85"><rect width="85" height="85" rx="3" fill="#ebebeb"/><path d="M34.7,11 Q42,14.8 49.1,11 L60,14.5 C62,20 64,28 65.2,34.5 L56.6,38 L55.6,36.5 L56,72.8 L27,72.8 L27.4,36.5 L26.4,38 L16.6,34.5 C17.8,28 20,20 23.5,14.8 Z" fill="#b32222"/><text x="42.5" y="31" text-anchor="middle" font-family="Liberation Sans" font-weight="700" font-size="9" fill="#f2f2f2">Woo</text></svg>
<div class="t" style="left:179.2px;top:936.07px;font-size:20px;line-height:20px;font-weight:400;color:#249bc8;transform:scaleX(0.9762);transform-origin:0 0;text-decoration:underline;text-decoration-thickness:1.2px;text-underline-offset:1.8px;text-decoration-skip-ink:none;">Red Woo T-Shirt</div>
<div class="t" style="left:364.8px;top:936.07px;font-size:20px;line-height:20px;font-weight:400;color:#3f4145;transform:scaleX(1.0214);transform-origin:0 0;">This is the product short description. You</div>
<div class="t" style="left:363.78px;top:970.77px;font-size:20px;line-height:20px;font-weight:400;color:#3f4145;transform:scaleX(1.022);transform-origin:0 0;">can choose which columns display in the table.</div>
<svg class="r" style="left:837.5px;top:935.3px" width="116" height="23" viewBox="0 0 116 23"><defs><clipPath id="c935"><rect x="0" y="0" width="116.0" height="23"/></clipPath></defs><g fill="#d2d2d2"><polygon transform="translate(0.00,0)" points="10.70,0.40 14.11,7.11 21.54,8.28 16.22,13.59 17.40,21.02 10.70,17.60 4.00,21.02 5.18,13.59 -0.14,8.28 7.29,7.11"/><polygon transform="translate(22.90,0)" points="10.70,0.40 14.11,7.11 21.54,8.28 16.22,13.59 17.40,21.02 10.70,17.60 4.00,21.02 5.18,13.59 -0.14,8.28 7.29,7.11"/><polygon transform="translate(45.80,0)" points="10.70,0.40 14.11,7.11 21.54,8.28 16.22,13.59 17.40,21.02 10.70,17.60 4.00,21.02 5.18,13.59 -0.14,8.28 7.29,7.11"/><polygon transform="translate(68.70,0)" points="10.70,0.40 14.11,7.11 21.54,8.28 16.22,13.59 17.40,21.02 10.70,17.60 4.00,21.02 5.18,13.59 -0.14,8.28 7.29,7.11"/><polygon transform="translate(91.60,0)" points="10.70,0.40 14.11,7.11 21.54,8.28 16.22,13.59 17.40,21.02 10.70,17.60 4.00,21.02 5.18,13.59 -0.14,8.28 7.29,7.11"/></g><g fill="#1a9bcc" clip-path="url(#c935)"><polygon transform="translate(0.00,0)" points="10.70,0.40 14.11,7.11 21.54,8.28 16.22,13.59 17.40,21.02 10.70,17.60 4.00,21.02 5.18,13.59 -0.14,8.28 7.29,7.11"/><polygon transform="translate(22.90,0)" points="10.70,0.40 14.11,7.11 21.54,8.28 16.22,13.59 17.40,21.02 10.70,17.60 4.00,21.02 5.18,13.59 -0.14,8.28 7.29,7.11"/><polygon transform="translate(45.80,0)" points="10.70,0.40 14.11,7.11 21.54,8.28 16.22,13.59 17.40,21.02 10.70,17.60 4.00,21.02 5.18,13.59 -0.14,8.28 7.29,7.11"/><polygon transform="translate(68.70,0)" points="10.70,0.40 14.11,7.11 21.54,8.28 16.22,13.59 17.40,21.02 10.70,17.60 4.00,21.02 5.18,13.59 -0.14,8.28 7.29,7.11"/><polygon transform="translate(91.60,0)" points="10.70,0.40 14.11,7.11 21.54,8.28 16.22,13.59 17.40,21.02 10.70,17.60 4.00,21.02 5.18,13.59 -0.14,8.28 7.29,7.11"/></g></svg>
<div class="t" style="left:978.0px;top:936.07px;font-size:20px;line-height:20px;font-weight:400;color:#3f4145;transform:scaleX(0.9443);transform-origin:0 0;text-decoration:line-through;text-decoration-thickness:1.5px;">$29.99</div>
<div class="t" style="left:1042.0px;top:936.07px;font-size:20px;line-height:20px;font-weight:700;color:#3f4145;transform:scaleX(0.9836);transform-origin:0 0;">$24.99</div>
<div class="r" style="left:1166.4px;top:929px;width:87.5px;height:42.5px;background:#f2f2f2;box-shadow:inset 0 1px 1px rgba(0,0,0,.125);"></div>
<div class="t" style="left:1196.88px;top:940.07px;font-size:20px;line-height:20px;font-weight:400;color:#43454b;transform:scaleX(0.92);transform-origin:0 0;">1</div>
<div class="r" style="left:1261.6px;top:929px;width:163.6px;height:43px;background:#2c2d33;"></div>
<div class="t" style="left:1292.2px;top:940.27px;font-size:20px;line-height:20px;font-weight:700;color:#fff;transform:scaleX(0.9604);transform-origin:0 0;">Add to cart</div>
<div class="r" style="left:1449.7px;top:945.3px;width:17px;height:17px;border:1px solid #cdcdcd;border-radius:3px;background:#fff;box-sizing:border-box;"></div>
</body></html>
